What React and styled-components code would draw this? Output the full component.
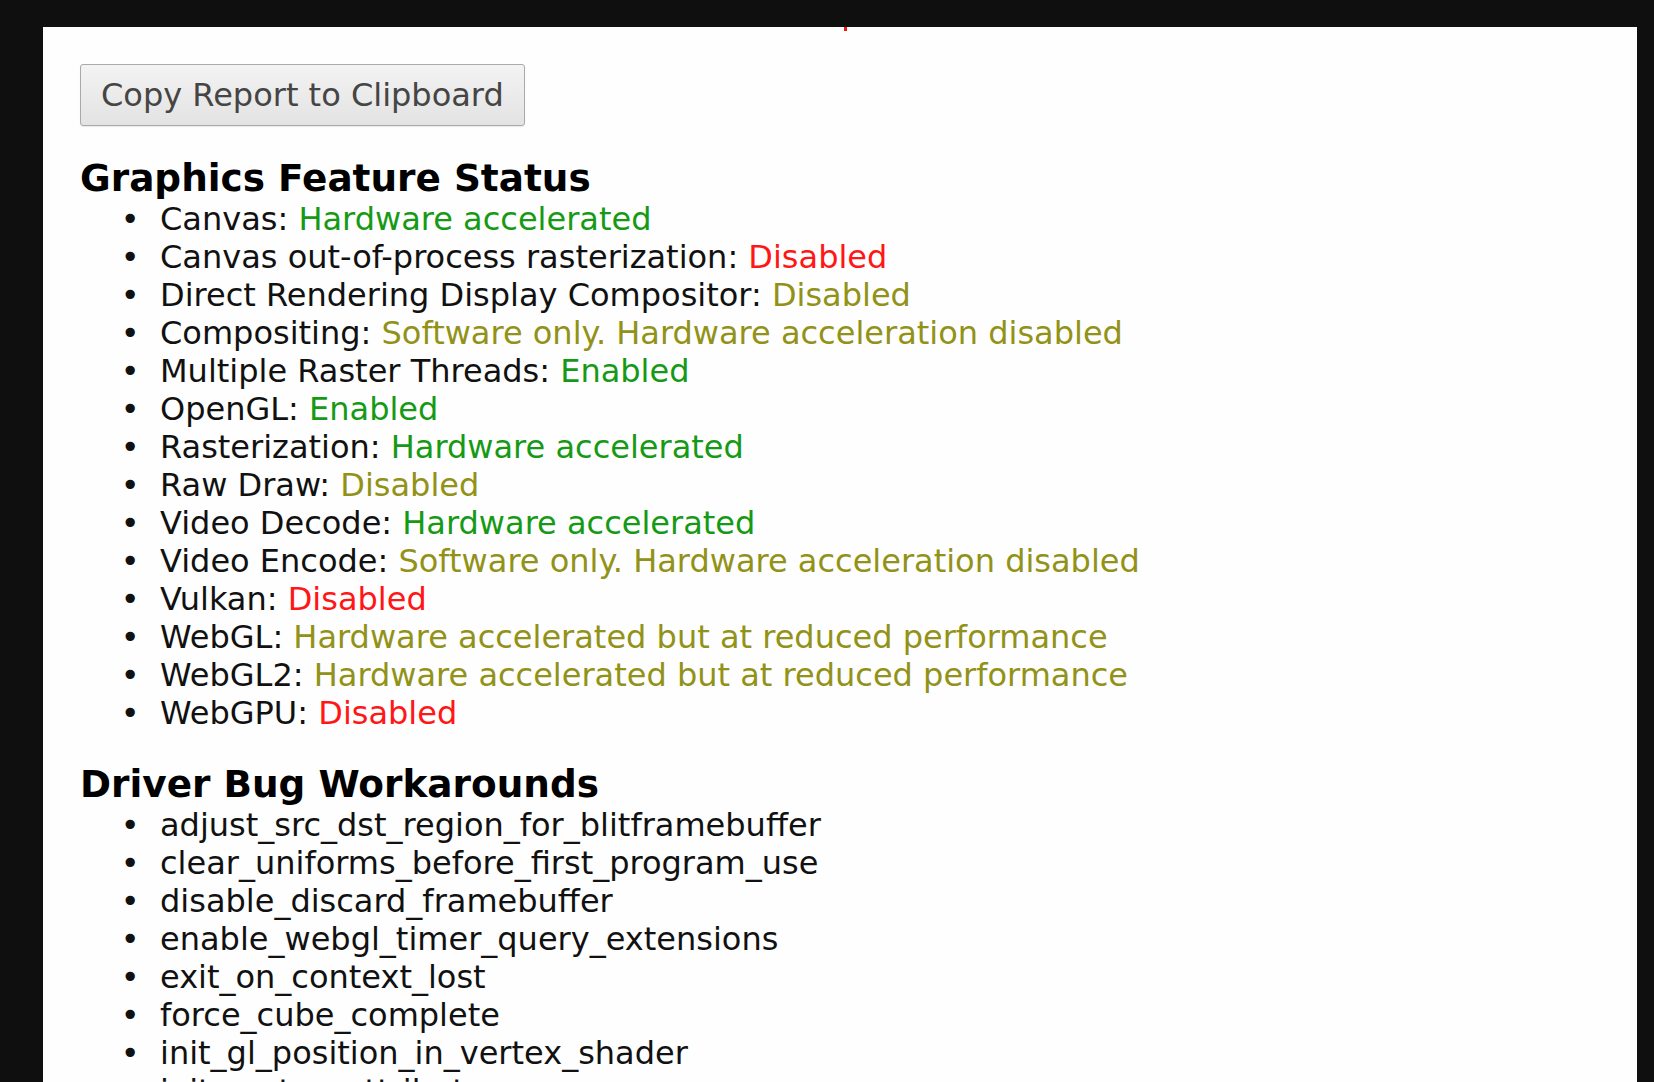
import styled, { createGlobalStyle } from "styled-components";

const GlobalStyle = createGlobalStyle`
  html, body {
    margin: 0;
    padding: 0;
    background: #0f0f0f;
    height: 100%;
    overflow: hidden;
  }
  #root {
    height: 100%;
  }
`;

const features = [
  { name: "Canvas", status: "Hardware accelerated", tone: "green" },
  { name: "Canvas out-of-process rasterization", status: "Disabled", tone: "red" },
  { name: "Direct Rendering Display Compositor", status: "Disabled", tone: "yellow" },
  { name: "Compositing", status: "Software only. Hardware acceleration disabled", tone: "yellow" },
  { name: "Multiple Raster Threads", status: "Enabled", tone: "green" },
  { name: "OpenGL", status: "Enabled", tone: "green" },
  { name: "Rasterization", status: "Hardware accelerated", tone: "green" },
  { name: "Raw Draw", status: "Disabled", tone: "yellow" },
  { name: "Video Decode", status: "Hardware accelerated", tone: "green" },
  { name: "Video Encode", status: "Software only. Hardware acceleration disabled", tone: "yellow" },
  { name: "Vulkan", status: "Disabled", tone: "red" },
  { name: "WebGL", status: "Hardware accelerated but at reduced performance", tone: "yellow" },
  { name: "WebGL2", status: "Hardware accelerated but at reduced performance", tone: "yellow" },
  { name: "WebGPU", status: "Disabled", tone: "red" },
];

const workarounds = [
  "adjust_src_dst_region_for_blitframebuffer",
  "clear_uniforms_before_first_program_use",
  "disable_discard_framebuffer",
  "enable_webgl_timer_query_extensions",
  "exit_on_context_lost",
  "force_cube_complete",
  "init_gl_position_in_vertex_shader",
  "init_vertex_attributes",
  "pack_parameters_workaround_with_pack_buffer",
];

const tones = {
  green: "rgb(22, 154, 22)",
  red: "rgb(255, 22, 22)",
  yellow: "rgb(146, 146, 24)",
};

const App = () => {
  return (
    <>
      <GlobalStyle />
      <Frame>
        <Page>
          <ScrolledOff>
            <Descender />
          </ScrolledOff>
          <CopyButton>Copy Report to Clipboard</CopyButton>
          <Section>
            <Heading>Graphics Feature Status</Heading>
            <List>
              {features.map((f) => (
                <Item key={f.name}>
                  {f.name}: <Status tone={f.tone}>{f.status}</Status>
                </Item>
              ))}
            </List>
          </Section>
          <Section>
            <Heading>Driver Bug Workarounds</Heading>
            <List>
              {workarounds.map((w) => (
                <Item key={w}>{w}</Item>
              ))}
            </List>
          </Section>
        </Page>
      </Frame>
    </>
  );
};

const Frame = styled.div`
  height: 100%;
  box-sizing: border-box;
  padding: 27px 17px 0 43px;
`;

const Page = styled.main`
  height: 100%;
  background: #fefefe;
  overflow: hidden;
  padding: 0 37px;
  font-family: "DejaVu Sans", "Liberation Sans", sans-serif;
  font-size: 32px;
  color: #111;
`;

// tail of a red status line scrolled just above the view
const ScrolledOff = styled.div`
  height: 37px;
  padding-left: 764px;
`;

const Descender = styled.div`
  width: 3px;
  height: 4px;
  background: #ff1010;
`;

const CopyButton = styled.button`
  display: block;
  margin: 0;
  padding: 11px 20px;
  font-family: inherit;
  font-size: 32px;
  line-height: 38px;
  color: #454545;
  background: linear-gradient(#f3f3f3, #e3e3e3);
  border: 1px solid #a9a9a9;
  border-radius: 3px;
  box-shadow: 0 1px 1px rgba(0, 0, 0, 0.08);
`;

const Section = styled.section`
  margin-top: 30px;
`;

const Heading = styled.h3`
  margin: 0;
  font-size: 37.4px;
  font-weight: bold;
  line-height: 44px;
  color: #000;
`;

const List = styled.ul`
  margin: 0;
  padding-left: 80px;
  list-style: disc;
`;

const Item = styled.li`
  line-height: 38px;

  &::marker {
    content: "\\2022\\00a0\\00a0";
  }
`;

const Status = styled.span`
  color: ${(p) => tones[p.tone]};
`;

export default App;
